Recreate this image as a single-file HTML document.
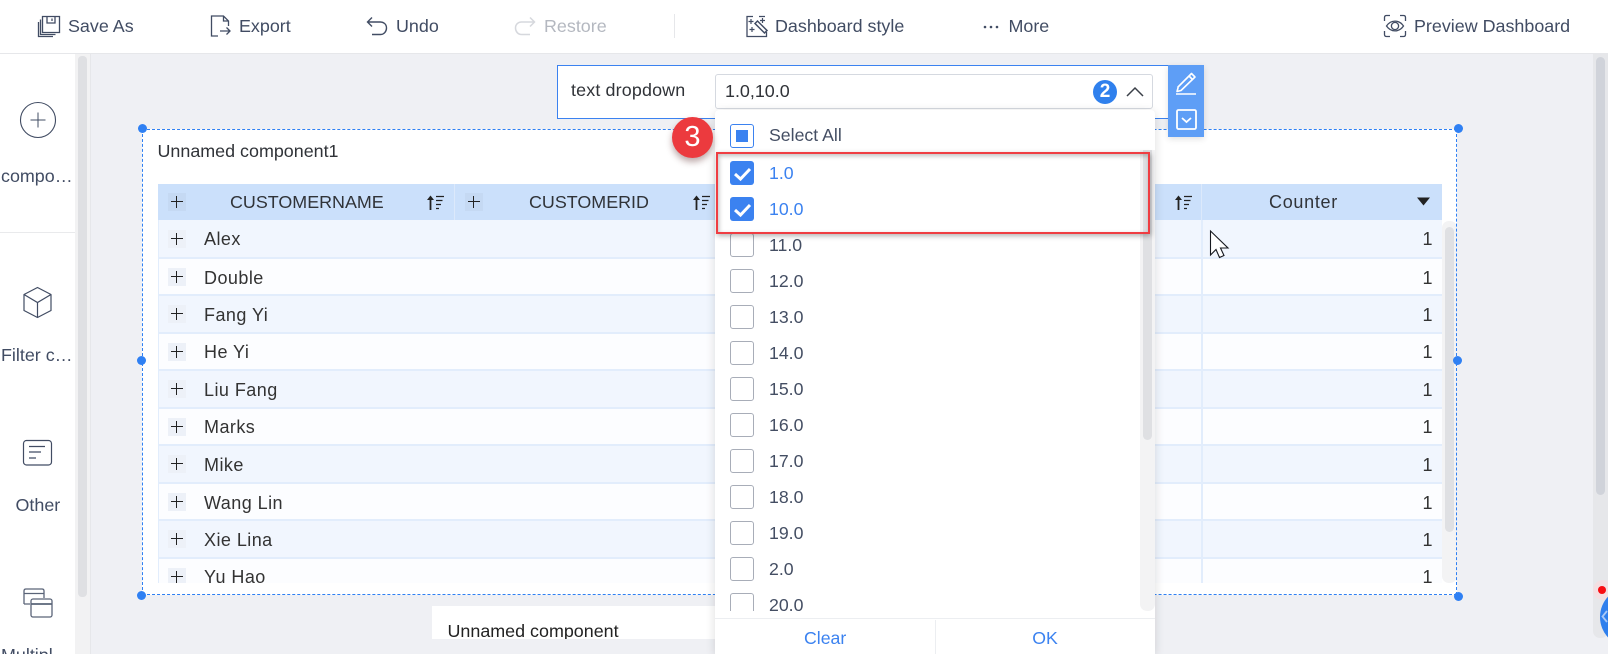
<!DOCTYPE html>
<html style="height:654px;overflow:hidden"><head><meta charset="utf-8"><style>
html,body{margin:0;padding:0}
body{position:relative;width:1608px;height:654px;overflow:hidden;background:#eff0f4;font-family:"Liberation Sans",sans-serif}
div,svg{position:absolute}
.t{white-space:nowrap;font-size:17.9px;line-height:24px;height:24px;color:#414c63}
.d{color:#303338}
.n{white-space:nowrap;font-size:18px;line-height:24px;height:24px;color:#333;letter-spacing:.45px;left:46.5px}
.o{white-space:nowrap;font-size:18px;line-height:24px;height:24px;color:#333;left:1265px;width:8.5px;text-align:right}
.r{left:0;width:1284.5px;box-sizing:border-box;border-left:1px solid #e2edfc;border-bottom:2px solid #e2edfc}
.a{background:#f1f6fe}.b{background:#fcfdff}
.p{left:10.5px;width:18px;height:18px;background:#edf1f8}
.p:before{content:"";position:absolute;left:3px;top:8px;width:12px;height:1px;background:#222}
.p:after{content:"";position:absolute;left:8px;top:3px;width:1px;height:12px;background:#222}
.c{left:15px;width:22px;height:22px;border:1px solid #a8adb8;border-radius:3px;background:#fff}
.k{left:15px;width:24px;height:24px;border-radius:3px;background:#3b82f0}
.l{left:54px;white-space:nowrap;font-size:17.7px;line-height:24px;height:24px;color:#444e63}
.v{color:#3b82f0}
.h{width:9px;height:9px;border-radius:50%;background:#2f80f3}
</style></head><body>
<div style="left:0;top:0;width:1608px;height:654px;overflow:hidden;background:#eff0f4">

<!-- top bar -->
<div style="left:0;top:0;width:1608px;height:53px;background:#fff;border-bottom:1px solid #e6e7ea"></div>
<svg style="left:37px;top:14px" width="24" height="24" viewBox="0 0 24 24" fill="none" stroke="#414c63" stroke-width="1.3"><path d="M5.5 2.5H22.5V18.5H5.5Z"/><path d="M10 2.5V9H18V2.5M15 4.5V7"/><path d="M3.5 5.5V20.5H18.5M1.5 8V22.500H16"/></svg>
<div class="t" style="left:68px;top:14px">Save As</div>
<svg style="left:209px;top:14px" width="24" height="24" viewBox="0 0 24 24" fill="none" stroke="#414c63" stroke-width="1.3"><path d="M9 22H2.500V2H14.500L19.500 7V12M14.500 2V7H19.500"/><path d="M11 17H21M17.500 13.500L21 17L17.500 20.500"/></svg>
<div class="t" style="left:239px;top:14px">Export</div>
<svg style="left:365px;top:14px" width="24" height="24" viewBox="0 0 24 24" fill="none" stroke="#414c63" stroke-width="1.4"><path d="M7 3.500L2.500 8L7 12.500M2.500 8H15.500C19 8 21.500 10.500 21.500 14C21.500 17.500 19 20.500 15.500 20.500H7"/></svg>
<div class="t" style="left:396px;top:14px">Undo</div>
<svg style="left:513px;top:14px" width="24" height="24" viewBox="0 0 24 24" fill="none" stroke="#d6d8dd" stroke-width="1.5"><path d="M17 3.500L21.500 8L17 12.500M21.500 8H8.500C5 8 2.500 10.500 2.500 14C2.500 17.500 5 20.500 8.500 20.500H17"/></svg>
<div class="t" style="left:544px;top:14px;color:#b4b8c0">Restore</div>
<div style="left:674px;top:14px;width:1px;height:24px;background:#e6e7ea"></div>
<svg style="left:745px;top:14px" width="24" height="24" viewBox="0 0 24 24" fill="none" stroke="#414c63" stroke-width="1.3"><path d="M8 2.500H2V22.500H21.500V18M14 2.500H20"/><path d="M10 9.500L12.500 7L22 16.500L19.500 19Z" stroke-width="1.500"/><path d="M6 5V10M3.500 7.500H8.500M17.500 4V9M15 6.500H20M7 13V18M4.500 15.500H9.500" stroke-width="1.200"/></svg>
<div class="t" style="left:775px;top:14px">Dashboard style</div>
<svg style="left:982px;top:24px" width="18" height="6"><circle cx="3" cy="3" r="1.300" fill="#414c63"/><circle cx="9" cy="3" r="1.300" fill="#414c63"/><circle cx="15" cy="3" r="1.300" fill="#414c63"/></svg>
<div class="t" style="left:1008.500px;top:14px">More</div>
<svg style="left:1383px;top:14px" width="24" height="24" viewBox="0 0 24 24" fill="none" stroke="#414c63" stroke-width="1.300"><path d="M1.500 7V3.500Q1.500 1.500 3.500 1.500H7M17 1.500H20.500Q22.500 1.500 22.500 3.500V7M22.500 17V20.500Q22.500 22.500 20.500 22.500H17M7 22.500H3.500Q1.500 22.500 1.500 20.500V17"/><path d="M3.500 12C8 5.500 16 5.500 20.500 12C16 18.500 8 18.500 3.500 12Z"/><circle cx="12" cy="12" r="3.600"/></svg>
<div class="t" style="left:1414px;top:14px">Preview Dashboard</div>

<!-- sidebar -->
<div style="left:0;top:54px;width:91px;height:600px;background:#fff;border-right:1px solid #e6e7ea;box-sizing:border-box"></div>
<div style="left:75px;top:54px;width:15px;height:600px;background:#f2f2f3"></div>
<div style="left:78px;top:56px;width:9px;height:541px;background:#dfe0e3;border-radius:4px"></div>
<div style="left:0;top:232px;width:75px;height:1px;background:#e9eaec"></div>
<svg style="left:19px;top:101px" width="38" height="38" fill="none" stroke="#414c63" stroke-width="1.100"><circle cx="19" cy="19" r="17.500"/><path d="M19 11.500V26.500M11.500 19H26.500" stroke-width="1"/></svg>
<div class="t" style="left:1px;top:164px">compo…</div>
<svg style="left:21px;top:285px" width="33" height="35" fill="none" stroke="#414c63" stroke-width="1.200"><path d="M16.500 2.500L30 9.500V25.500L16.500 32.500L3 25.500V9.500Z" stroke-linejoin="round"/><path d="M3 9.500L16.500 17.500L30 9.500M16.500 17.500V32.500"/></svg>
<div class="t" style="left:1px;top:343px">Filter c…</div>
<svg style="left:20px;top:436px" width="33" height="32" fill="none" stroke="#414c63" stroke-width="1.200"><rect x="3.500" y="4.500" width="28" height="24.500" rx="3"/><path d="M9 10.500H25M9 16H21M9 22H16"/></svg>
<div class="t" style="left:15.500px;top:493px">Other</div>
<svg style="left:21px;top:586px" width="33" height="34" fill="none" stroke="#5a6478" stroke-width="1.300"><path d="M3 18V5Q3 3 5 3H21Q23 3 23 5V12"/><path d="M3 7.500H23M3 18H9"/><rect x="10" y="13" width="21" height="18" rx="2"/><path d="M10 18H31" stroke-width="1.800"/></svg>
<div class="t" style="left:1px;top:643px">Multipl</div>

<!-- right scrollbar -->
<div style="left:1593px;top:54px;width:15px;height:584px;background:#e6e7ea;border-radius:0 0 7px 7px"></div>
<div style="left:1596px;top:57px;width:9px;height:438px;background:#d0d3da;border-radius:4.500px"></div>

<!-- selected component -->
<div style="left:142px;top:129px;width:1315px;height:466px;background:#fff"></div>
<div class="t d" style="left:157.500px;top:139px">Unnamed component1</div>

<!-- table -->
<div style="left:157.500px;top:184px;width:1284.500px;height:36px;background:#cbe0fb"></div>
<div style="left:454px;top:184px;width:1px;height:36px;background:#dce9fb"></div>
<div style="left:1201px;top:184px;width:1px;height:36px;background:#dce9fb"></div>
<div class="p" style="left:168px;top:193px;background:#c5d9f3"></div>
<div class="p" style="left:465px;top:193px;background:#c5d9f3"></div>
<div class="t d" style="left:230px;top:190px;font-size:17.900px">CUSTOMERNAME</div>
<div class="t d" style="left:529px;top:190px;font-size:17.900px">CUSTOMERID</div>
<div class="t d" style="left:1269px;top:190px;font-size:18px;letter-spacing:.7px">Counter</div>
<svg style="left:426px;top:194px" width="19" height="17" fill="#222" stroke="#222"><path d="M4.500 5V16" stroke-width="1.800"/><path d="M1 6L4.500 1.500L8 6Z" stroke="none"/><path d="M10 2.500H18M10 6.500H16.500M10 10.500H15M10 14.500H13" stroke-width="1.200" fill="none"/></svg>
<svg style="left:692px;top:194px" width="19" height="17" fill="#222" stroke="#222"><path d="M4.500 5V16" stroke-width="1.800"/><path d="M1 6L4.500 1.500L8 6Z" stroke="none"/><path d="M10 2.500H18M10 6.500H16.500M10 10.500H15M10 14.500H13" stroke-width="1.200" fill="none"/></svg>
<svg style="left:1174px;top:194px" width="19" height="17" fill="#222" stroke="#222"><path d="M4.500 5V16" stroke-width="1.800"/><path d="M1 6L4.500 1.500L8 6Z" stroke="none"/><path d="M10 2.500H18M10 6.500H16.500M10 10.500H15M10 14.500H13" stroke-width="1.200" fill="none"/></svg>
<svg style="left:1417px;top:197px" width="13" height="9"><path d="M0 .5H13L6.500 8.500Z" fill="#222"/></svg>

<div style="left:157.500px;top:220px;width:1284.500px;height:362.700px;overflow:hidden">
<div class="r a" style="top:0;height:39px"></div>
<div class="r b" style="top:39px;height:37px"></div>
<div class="r a" style="top:76px;height:38px"></div>
<div class="r b" style="top:114px;height:37px"></div>
<div class="r a" style="top:151px;height:38px"></div>
<div class="r b" style="top:189px;height:37px"></div>
<div class="r a" style="top:226px;height:38px"></div>
<div class="r b" style="top:264px;height:37px"></div>
<div class="r a" style="top:301px;height:38px"></div>
<div class="r b" style="top:339px;height:37px"></div>
<div style="left:1043.500px;top:0;width:2px;height:363px;background:#e2edfc"></div>
<div class="p" style="top:10px"></div><div class="n" style="top:7px">Alex</div><div class="o" style="top:7px">1</div>
<div class="p" style="top:48px"></div><div class="n" style="top:46px">Double</div><div class="o" style="top:46px">1</div>
<div class="p" style="top:85px"></div><div class="n" style="top:83px">Fang Yi</div><div class="o" style="top:83px">1</div>
<div class="p" style="top:123px"></div><div class="n" style="top:120px">He Yi</div><div class="o" style="top:120px">1</div>
<div class="p" style="top:160px"></div><div class="n" style="top:158px">Liu Fang</div><div class="o" style="top:158px">1</div>
<div class="p" style="top:198px"></div><div class="n" style="top:195px">Marks</div><div class="o" style="top:195px">1</div>
<div class="p" style="top:235px"></div><div class="n" style="top:233px">Mike</div><div class="o" style="top:233px">1</div>
<div class="p" style="top:273px"></div><div class="n" style="top:271px">Wang Lin</div><div class="o" style="top:271px">1</div>
<div class="p" style="top:310px"></div><div class="n" style="top:308px">Xie Lina</div><div class="o" style="top:308px">1</div>
<div class="p" style="top:348px"></div><div class="n" style="top:345px">Yu Hao</div><div class="o" style="top:345px">1</div>
</div>

<!-- table scrollbar -->
<div style="left:1442px;top:221px;width:15px;height:362px;background:#f3f3f4;border-radius:7px"></div>
<div style="left:1445px;top:227px;width:9px;height:305px;background:#dfe0e3;border-radius:4.500px"></div>

<!-- cursor -->
<svg style="left:1208px;top:229px" width="24" height="30"><path d="M2.500 2V26L8 20.500L11.500 28.500L16 26.500L12.500 19H20Z" fill="#fff" stroke="#15181f" stroke-width="1.100"/></svg>

<!-- dashed selection -->
<div style="left:142px;top:129px;width:1315px;height:466px;box-sizing:border-box;border:1px dashed #2f80f3"></div>
<div class="h" style="left:137.500px;top:124px"></div>
<div class="h" style="left:1453.500px;top:124px"></div>
<div class="h" style="left:137px;top:356px"></div>
<div class="h" style="left:1453px;top:356px"></div>
<div class="h" style="left:137px;top:591px"></div>
<div class="h" style="left:1453.500px;top:592px"></div>

<!-- bottom component -->
<div style="left:432px;top:606px;width:290px;height:33px;background:#fff;overflow:hidden"><div class="t" style="left:15.500px;top:13px;color:#222;font-size:17.900px">Unnamed component</div></div>

<!-- filter control -->
<div style="left:557px;top:65px;width:611px;height:54px;box-sizing:border-box;background:#fff;border:1px solid #3b82f0;border-right:0"></div>
<div class="t d" style="left:571px;top:78px;letter-spacing:.15px">text dropdown</div>
<div style="left:715px;top:74px;width:438px;height:35px;box-sizing:border-box;background:#fff;border:1px solid #d5d9e0;border-radius:3px"></div>
<div class="t d" style="left:725px;top:79px">1.0,10.0</div>
<div style="left:1093px;top:80px;width:24px;height:24px;border-radius:50%;background:#2f80ed;color:#fff;font-size:19px;font-weight:bold;line-height:24px;text-align:center">2</div>
<svg style="left:1125px;top:85px" width="20" height="13" fill="none" stroke="#3a3f48" stroke-width="1.500"><path d="M2 11L10 3L18 11"/></svg>

<!-- side buttons -->
<div style="left:1168px;top:65px;width:36px;height:72px;background:#5e9ef6;box-shadow:0 2px 6px rgba(0,0,0,.12)"></div>
<svg style="left:1174px;top:71px" width="24" height="24" fill="none" stroke="#fff" stroke-width="1.600"><path d="M4 17L3 20.500L7 19.500L21 6L17.500 2.500L4 16Z" stroke-linejoin="round"/><path d="M15 5L19 9"/><path d="M2 23H22"/></svg>
<svg style="left:1175px;top:108px" width="23" height="23" fill="none" stroke="#fff" stroke-width="1.800"><rect x="2" y="2" width="19" height="19" rx="1.500"/><path d="M7 10L11.500 14L16 10"/></svg>

<!-- dropdown panel -->
<div style="left:715px;top:110px;width:440px;height:544px;background:#fff;border-radius:4px 4px 0 0;box-shadow:0 2px 10px rgba(0,0,0,.14);overflow:hidden">
<div style="left:425px;top:40px;width:15px;height:461px;background:#f3f3f4;border-radius:0 0 7px 7px"></div>
<div style="left:428px;top:40px;width:9px;height:290px;background:#dfe0e3;border-radius:0 0 4.500px 4.500px"></div>

<div style="left:15px;top:14px;width:24px;height:24px;box-sizing:border-box;border:1px solid #3b82f0;border-radius:3px"></div>
<div style="left:21px;top:20px;width:12px;height:12px;background:#3b82f0"></div>
<div class="l" style="top:13px">Select All</div>

<div class="k" style="top:51px"></div><svg style="left:15px;top:51px" width="24" height="24" fill="none" stroke="#fff" stroke-width="3"><path d="M5 13L10.500 18L20 8"/></svg><div class="l v" style="top:51px">1.0</div>
<div class="k" style="top:87px"></div><svg style="left:15px;top:87px" width="24" height="24" fill="none" stroke="#fff" stroke-width="3"><path d="M5 13L10.500 18L20 8"/></svg><div class="l v" style="top:87px">10.0</div>

<div class="c" style="top:123px"></div><div class="l" style="top:123px">11.0</div>
<div class="c" style="top:159px"></div><div class="l" style="top:159px">12.0</div>
<div class="c" style="top:195px"></div><div class="l" style="top:195px">13.0</div>
<div class="c" style="top:231px"></div><div class="l" style="top:231px">14.0</div>
<div class="c" style="top:267px"></div><div class="l" style="top:267px">15.0</div>
<div class="c" style="top:303px"></div><div class="l" style="top:303px">16.0</div>
<div class="c" style="top:339px"></div><div class="l" style="top:339px">17.0</div>
<div class="c" style="top:375px"></div><div class="l" style="top:375px">18.0</div>
<div class="c" style="top:411px"></div><div class="l" style="top:411px">19.0</div>
<div class="c" style="top:447px"></div><div class="l" style="top:447px">2.0</div>
<div class="c" style="top:483px"></div><div class="l" style="top:483px">20.0</div>

<div style="left:0;top:501px;width:440px;height:43px;background:#fff"></div>
<div style="left:0;top:508px;width:440px;height:1px;background:#eceef1"></div>
<div style="left:220px;top:510px;width:1px;height:34px;background:#eceef1"></div>
<div class="l v" style="left:89px;top:516px;width:40px;text-align:center">Clear</div>
<div class="l v" style="left:310px;top:516px;width:40px;text-align:center">OK</div>
</div>

<!-- red highlight -->
<div style="left:716px;top:152px;width:434px;height:82px;box-sizing:border-box;border:2px solid #ef3d42;box-shadow:1px 2px 5px rgba(0,0,0,.3),inset 1px 2px 5px rgba(0,0,0,.25)"></div>

<!-- badge 3 -->
<div style="left:672px;top:117px;width:41px;height:41px;border-radius:50%;background:#ec3a3e;color:#fff;font-size:29px;line-height:41px;text-align:center;box-shadow:0 4px 7px rgba(90,40,40,.4)">3</div>

<!-- floating widget -->
<div style="left:1593px;top:580px;width:20px;height:20px;border-radius:50%;background:#f3dfe2"></div>
<div style="left:1598px;top:586px;width:8px;height:8px;border-radius:50%;background:#f80d12"></div>
<div style="left:1600px;top:587px;width:60px;height:60px;border-radius:50%;background:#2f80ed"></div>
<svg style="left:1601px;top:610px" width="7" height="13" fill="none" stroke="#a9c9f7" stroke-width="1.800"><path d="M6 1L1.500 6.500L6 12"/></svg>

</div>
</body></html>
